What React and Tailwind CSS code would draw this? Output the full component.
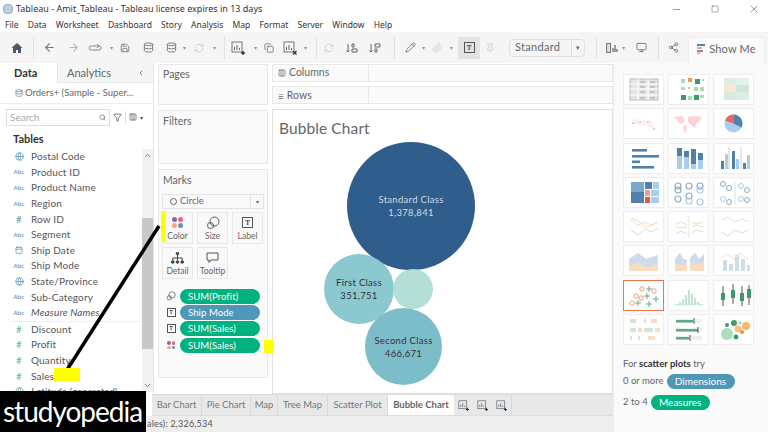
import React from 'react';
import { ArrowLeft, ArrowRight, Save, Database, RefreshCw, Copy, Pencil, Paperclip, Pin, Monitor, Share2, Search, Filter, Columns3, ChevronUp, ChevronDown, ChevronLeft, Minus, X, Square, Globe, Calendar } from 'lucide-react';

const menus = ['File', 'Data', 'Worksheet', 'Dashboard', 'Story', 'Analysis', 'Map', 'Format', 'Server', 'Window', 'Help'];

const fields = [
    ['geo', 'Postal Code'], ['abc', 'Product ID'], ['abc', 'Product Name'], ['abc', 'Region'],
    ['numBlue', 'Row ID'], ['abc', 'Segment'], ['date', 'Ship Date'], ['abc', 'Ship Mode'],
    ['geo', 'State/Province'], ['abc', 'Sub-Category'], ['abcI', 'Measure Names'],
];
const measures = [['num', 'Discount'], ['num', 'Profit'], ['num', 'Quantity'], ['num', 'Sales'], ['geoG', 'Latitude (generated)']];

const tabs = [['Bar Chart', 'w-[50px]'], ['Pie Chart', 'w-[49px]'], ['Map', 'w-[27px]'], ['Tree Map', 'w-[50px]'], ['Scatter Plot', 'w-[60px]']];

const FieldIcon = ({ type }) => {
    if (type === 'abc' || type === 'abcI') return <span className="text-[6px] font-semibold text-[#5a8fb0] w-[12px] text-center leading-none">Abc</span>;
    if (type === 'num') return <span className="text-[9px] text-[#57b08e] w-[12px] text-center leading-none">#</span>;
    if (type === 'numBlue') return <span className="text-[9px] text-[#5a8fb0] w-[12px] text-center leading-none">#</span>;
    if (type === 'date') return <span className="w-[12px] flex justify-center"><Calendar size={8} className="text-[#5a8fb0]" /></span>;
    if (type === 'geoG') return <span className="w-[12px] flex justify-center"><Globe size={9} className="text-[#57b08e]" /></span>;
    return <span className="w-[12px] flex justify-center"><Globe size={9} className="text-[#5a9ab8]" /></span>;
};

const Dot = () => <span className="text-[#999] text-[6px] w-[8px] text-center">▾</span>;
const Sep = () => <div className="w-px h-[22px] bg-[#e2e2e2] shrink-0" />;

const ChartIcon = ({ mark, size = 14 }) => (
    <svg width={size} height={size} viewBox="0 0 14 14" fill="none" stroke="#777" strokeWidth="1">
        <rect x="1" y="1" width="10" height="10" />
        <path d="M3.5 9V6M6 9V4M8.5 9V7" stroke="#3b6f94" />
        {mark === 'plus' && <path d="M10 12h4M12 10v4" stroke="#333" strokeWidth="1.3" />}
        {mark === 'x' && <path d="M10 10l3.5 3.5M13.5 10L10 13.5" stroke="#333" strokeWidth="1.3" />}
    </svg>
);

const TextBox = ({ size = 14 }) => (
    <span className="border border-[#555] font-serif font-bold text-[#555] flex items-center justify-center leading-none" style={{ width: size, height: size, fontSize: size - 3 }}>T</span>
);

const ColorDots = ({ size = 5 }) => (
    <span className="grid grid-cols-2 gap-px">
        <span className="rounded-full bg-[#8b6a9e]" style={{ width: size, height: size }} />
        <span className="rounded-full bg-[#ea6b73]" style={{ width: size, height: size }} />
        <span className="rounded-full bg-[#f2a77d]" style={{ width: size, height: size }} />
        <span className="rounded-full bg-[#5a9aa8]" style={{ width: size, height: size }} />
    </span>
);

const SizeIcon = ({ size = 14 }) => (
    <svg width={size} height={size} viewBox="0 0 14 14" fill="none" stroke="#555" strokeWidth="1">
        <circle cx="8.5" cy="5.5" r="4.5" />
        <circle cx="4.5" cy="9.5" r="3" />
    </svg>
);

const MarkCard = ({ icon, label }) => (
    <div className="w-[31px] h-[32px] bg-[#f9f9f9] border border-[#e8e8e8] flex flex-col items-center justify-between pt-[3px] pb-[1px]">
        <span className="h-[14px] flex items-center">{icon}</span>
        <span className="text-[8.5px] leading-[11px] text-[#666]">{label}</span>
    </div>
);

const Pill = ({ icon, color, label }) => (
    <div className="flex items-center h-[15px]">
        <span className="w-[18px] flex justify-center">{icon}</span>
        <span className={`w-[80px] h-[15px] rounded-full ${color} text-white text-[9.5px] tracking-[0.1px] leading-[15px] pl-[8px]`}>{label}</span>
    </div>
);

const Thumb = ({ active, children }) => (
    <div className={`w-[41px] h-[31px] bg-white flex items-center justify-center ${active ? 'border border-[#e8764a]' : 'border border-[#eeeeee]'}`}>
        <svg width="39" height="29" viewBox="0 0 39 29" fill="none">{children}</svg>
    </div>
);

const Slot = ({ className, children }) => <div className={`flex shrink-0 ${className}`}>{children}</div>;

const B = '#4f81ab';
const LB = '#a9cdee';
const O = '#f8dcc0';
const S = '#cfdcec';

const thumbs = [
    <><rect x="6" y="4" width="28" height="21" fill="#e4e4e4" stroke="#bbb" /><path d="M6 9h28M6 14h28M6 20h28M14 4v21M24 4v21" stroke="#fff" /><path d="M16 7h5M26 7h5M16 12h5M26 12h5M16 17h5M26 17h5M16 23h5M26 23h5" stroke="#888" strokeWidth=".7" /></>,
    <><rect x="12" y="4" width="4" height="4" fill="#a9dcb9" /><rect x="19" y="3" width="4" height="4" fill="#f2994a" /><rect x="26" y="4" width="5" height="5" fill="#3d9a6c" /><rect x="33" y="4" width="2" height="2" fill="#a9dcb9" /><rect x="12" y="12" width="4" height="3" fill="#a9dcb9" /><rect x="19" y="12" width="2" height="2" fill="#f7bd84" /><rect x="25" y="12" width="4" height="4" fill="#a9dcb9" /><rect x="31" y="12" width="4" height="4" fill="#a9dcb9" /><rect x="12" y="20" width="5" height="5" fill="#3d9a6c" /><rect x="19" y="21" width="4" height="4" fill="#a9dcb9" /><rect x="25" y="20" width="5" height="5" fill="#3d9a6c" /><rect x="31" y="20" width="4" height="3" fill="#a9dcb9" /></>,
    <><rect x="10" y="3" width="12" height="7" fill="#dceee3" /><rect x="22" y="3" width="13" height="7" fill="#e3f1e8" /><rect x="10" y="10" width="12" height="7" fill="#fbe6d2" /><rect x="22" y="10" width="13" height="7" fill="#cfe6d8" /><rect x="10" y="17" width="12" height="8" fill="#d6eadd" /><rect x="22" y="17" width="13" height="8" fill="#dceee3" /></>,
    <><path d="M7 11l5-1 4 2 6-2 6 3 2 6-3 1-4-4-5 1-3-2-4 1z" fill="#fdeef0" /><circle cx="9" cy="14" r="1" fill="#f0b0b5" /><circle cx="16" cy="13" r="1" fill="#f0b0b5" /><circle cx="24" cy="13" r=".8" fill="#f0b0b5" /><circle cx="30" cy="20" r="1" fill="#f0b0b5" /></>,
    <path d="M5 8l8-1 3 4-2 3-3 1-3-4zM14 16l4 1-1 7-2-2zM19 8l5-1 9 1-3 5-3 1-1 5-3-2-4-4z" fill="#fbd3d5" />,
    <><circle cx="19.5" cy="14.5" r="9" fill={LB} /><path d="M19.5 14.5V5.5a9 9 0 0 1 8 13z" fill={B} /><path d="M19.5 14.5l-8.5-3a9 9 0 0 1 8.5-6z" fill="#e8675f" /></>,
    <><rect x="8" y="5" width="15" height="2.6" fill={B} /><rect x="8" y="11" width="27" height="2.6" fill={B} /><rect x="8" y="16.5" width="8" height="2.6" fill={B} /><rect x="8" y="22" width="22" height="2.6" fill={B} /></>,
    <><rect x="8" y="4" width="5" height="21" fill={LB} /><rect x="8" y="4" width="5" height="8" fill={B} /><rect x="15" y="7" width="5" height="18" fill={LB} /><rect x="15" y="7" width="5" height="6" fill={B} /><rect x="22" y="5" width="5" height="20" fill={LB} /><rect x="22" y="5" width="5" height="15" fill={B} /><rect x="29" y="9" width="5" height="16" fill={LB} /><rect x="29" y="9" width="5" height="7" fill={B} /></>,
    <><path d="M15 3v22M27 3v22" stroke="#ccc" /><rect x="7" y="17" width="3" height="8" fill={B} /><rect x="11" y="10" width="3" height="15" fill={LB} /><rect x="18" y="7" width="3" height="18" fill={B} /><rect x="22" y="15" width="3" height="10" fill={LB} /><rect x="29" y="19" width="3" height="6" fill={B} /><rect x="33" y="11" width="3" height="14" fill={LB} /></>,
    <><rect x="7" y="4" width="13" height="10" fill="#7aa8cc" /><rect x="7" y="14" width="13" height="11" fill={B} /><rect x="21" y="4" width="7" height="7" fill={B} /><rect x="29" y="4" width="6" height="7" fill={LB} /><rect x="21" y="12" width="5" height="6" fill="#f29c94" /><rect x="27" y="12" width="8" height="6" fill={LB} /><rect x="21" y="19" width="5" height="6" fill="#e0574f" /><rect x="27" y="19" width="8" height="6" fill={LB} /></>,
    <g stroke="#8fa9bf" strokeWidth="1.2"><circle cx="9" cy="8" r="3" /><circle cx="9" cy="12" r="3" /><circle cx="9" cy="21" r="3" /><circle cx="20" cy="8" r="3" /><circle cx="20" cy="18" r="3" /><circle cx="20" cy="23" r="3" stroke={LB} /><circle cx="31" cy="8" r="3" /><circle cx="31" cy="12" r="3" stroke={LB} /><circle cx="31" cy="24" r="3" stroke={LB} /></g>,
    <g stroke="#8fa9bf" strokeWidth="1"><path d="M21 4v22" stroke="#ddd" /><circle cx="9" cy="6" r="2.5" /><circle cx="15" cy="10" r="2.5" /><circle cx="9" cy="21" r="2.5" stroke={LB} /><circle cx="15" cy="24" r="2.5" /><circle cx="27" cy="8" r="2.5" stroke={LB} /><circle cx="33" cy="12" r="2.5" /><circle cx="27" cy="21" r="2.5" stroke={LB} /><circle cx="33" cy="22" r="2.5" /></g>,
    <><path d="M7 8l7 5 7-3 6 3 7-3" stroke={O} /><path d="M7 6l7 3 7 6 6-1 7-4" stroke={O} /><path d="M7 18l7 5 7-6 6 3 7-4" stroke={S} /></>,
    <><path d="M20 4v22" stroke="#e5e5e5" /><path d="M7 12l5-2 6 3M23 10l4 2 7-2" stroke={O} /><path d="M7 15l5 1 6-1M23 15l4-2 7 2" stroke={O} /><path d="M7 22l5-3 6 3M23 21l4-3 7 2" stroke={S} /></>,
    <><path d="M7 8l7-3 7 5 7-3 6 3" stroke={O} /><path d="M7 20l7 4 7-6 7 3 6-3" stroke={S} /><path d="M36 5v20" stroke="#eee" strokeDasharray="1 2" /></>,
    <><path d="M5 25V13l9-6 8 6 12-4v16z" fill={O} /><path d="M5 19V13l9-6 8 6 12-4v8l-12 4-8-4z" fill={S} /></>,
    <><path d="M6 25V13l5-6 4 7 3-1v12zM21 25V12l5-5 4 6 5-5v17z" fill={O} /><path d="M6 17v-4l5-6 4 7 3-1v5l-6 1zM21 17v-5l5-5 4 6 5-5v8l-6 2z" fill={S} /></>,
    <><rect x="9" y="14" width="4" height="11" fill={S} /><rect x="15" y="18" width="4" height="7" fill={S} /><rect x="21" y="9" width="4" height="16" fill={S} /><rect x="27" y="13" width="4" height="12" fill={S} /><rect x="33" y="19" width="3" height="6" fill={S} /><path d="M7 12l7-4 6 5 6-6 8 6" stroke={O} /></>,
    <g fill="none" strokeWidth="1"><g stroke="#f2a36b"><circle cx="8" cy="22" r="2.2" /><circle cx="12" cy="15" r="2.2" /><circle cx="18" cy="8" r="2.2" /><circle cx="30" cy="10" r="2.2" /><circle cx="17" cy="17" r="2.2" /></g><path d="M25 5v6M22 8h6M23 12v6M20 15h6M14 19v6M11 22h6M25 20v6M22 23h6M32 15v6M29 18h6" stroke="#5fae8e" /></g>,
    <><path d="M5 24h30" stroke="#d9ebdf" /><path d="M8 24v-1M11 24v-3M14 24v-6M17 24v-10M20 24v-15M23 24v-11M26 24v-7M29 24v-3M32 24v-1" stroke="#c4e3d1" strokeWidth="2.2" /></>,
    <><path d="M9 5v20M19 3v20M28 5v20M35 4v20" stroke="#555" /><rect x="7" y="12" width="4" height="7" fill="#3d9a6c" /><rect x="17" y="9" width="4" height="8" fill="#3d9a6c" /><rect x="26" y="12" width="4" height="8" fill="#3d9a6c" /><rect x="33" y="8" width="4" height="9" fill="#3d9a6c" /></>,
    <><g fill="#cfe6d8"><rect x="6" y="4" width="6" height="4" /><rect x="20" y="4" width="2" height="4" /><rect x="6" y="13" width="6" height="4" /><rect x="20" y="13" width="9" height="4" /><rect x="6" y="21" width="2" height="4" /><rect x="14" y="21" width="2" height="4" /></g><g fill="#fbdcc2"><rect x="27" y="4" width="6" height="4" /><rect x="14" y="13" width="4" height="4" /><rect x="31" y="13" width="5" height="4" /><rect x="24" y="21" width="7" height="4" /></g></>,
    <><rect x="7" y="4" width="26" height="4" fill="#eee" /><rect x="7" y="13" width="26" height="4" fill="#eee" /><rect x="7" y="21" width="26" height="4" fill="#eee" /><rect x="7" y="5" width="17" height="2.5" fill="#5ea984" /><rect x="7" y="14" width="22" height="2.5" fill="#5ea984" /><rect x="7" y="22" width="13" height="2.5" fill="#5ea984" /><path d="M25 3v6M29 12v6M21 20v6" stroke="#555" /></>,
    <><circle cx="13" cy="19" r="6" fill="#a9e0b8" /><circle cx="24" cy="14" r="3.5" fill="#f8c07f" /><circle cx="32" cy="11" r="4" fill="#f8b56a" /><circle cx="20" cy="8" r="3" fill="#3d9a6c" /><circle cx="13" cy="10" r="2" fill="#3d9a6c" /><circle cx="26" cy="8" r="1.8" fill="#a9e0b8" /><circle cx="28" cy="17" r="2" fill="#f2903f" /><circle cx="22" cy="22" r="2.4" fill="#3d9a6c" /></>,
];

const bubbles = [
    ['left-[74px] top-[32px] w-[128px] h-[128px] bg-[#2f5d8c] text-[#cfdae5]', 'Standard Class', '1,378,841'],
    ['left-[51px] top-[144px] w-[70px] h-[70px] bg-[#8cc8cf] text-[#333]', 'First Class', '351,751'],
    ['left-[120px] top-[159px] w-[40px] h-[40px] bg-[#b4dfd6] text-[#333]', '', ''],
    ['left-[92px] top-[198px] w-[77px] h-[77px] bg-[#7dbdca] text-[#333]', 'Second Class', '466,671'],
];

export default function App() {
    return (
        <div className="relative w-[768px] h-[432px] overflow-hidden bg-white flex flex-col text-[#555]" style={{ fontFamily: 'Lato, sans-serif' }}>
            {/* title bar */}
            <div className="h-[18px] flex items-center text-[#333] text-[9px] shrink-0" style={{ fontFamily: '"Noto Sans", sans-serif' }}>
                <span className="ml-[3px] mr-[3px] w-[10px] h-[10px] rounded-sm bg-[#bcd2e2] border border-[#8fb0c8]" />
                <span>Tableau - Amit_Tableau - Tableau license expires in 13 days</span>
                <div className="ml-auto flex items-center text-[#555]">
                    <Minus size={11} className="mr-[29px]" strokeWidth={1.3} />
                    <Square size={8} className="mr-[29px]" strokeWidth={1.5} />
                    <X size={12} className="mr-[8px]" strokeWidth={1.2} />
                </div>
            </div>

            {/* menu */}
            <div className="h-[14px] flex items-center gap-[9.2px] pl-[5px] text-[8.5px] text-[#333] shrink-0" style={{ fontFamily: '"Noto Sans", sans-serif' }}>
                {menus.map(m => <span key={m}>{m}</span>)}
            </div>

            {/* toolbar */}
            <div className="h-[31px] bg-[#f5f5f5] flex items-center shrink-0 text-[#777]">
                <Slot className="w-[33px] justify-center">
                    <svg width="12" height="12" viewBox="0 0 12 12" fill="#4a5a68"><path d="M6 1L0.5 6H2v5h3V8h2v3h3V6h1.5z" /></svg>
                </Slot>
                <Sep />
                <Slot className="w-[30px] justify-center"><ArrowLeft size={13} /></Slot>
                <Slot className="w-[19px] justify-center"><ArrowRight size={13} className="text-[#bbb]" /></Slot>
                <Slot className="w-[24px] justify-center"><svg width="14" height="10" viewBox="0 0 14 10" fill="none" stroke="#888"><rect x="1" y="3" width="12" height="4" rx="2" /><path d="M9 1l2 2-2 2" /></svg></Slot>
                <Dot />
                <Slot className="w-[20px] justify-center"><Save size={10} /></Slot>
                <Slot className="w-[27px] justify-center"><Database size={11} /></Slot>
                <Slot className="w-[18px] justify-center"><Database size={11} /></Slot>
                <Dot />
                <Slot className="w-[22px] justify-center"><RefreshCw size={10} className="text-[#ccc]" /></Slot>
                <Dot />
                <Slot className="w-[6px]" />
                <Sep />
                <Slot className="w-[26px] justify-center"><ChartIcon mark="plus" /></Slot>
                <Dot />
                <Slot className="w-[20px] justify-center"><Copy size={10} /></Slot>
                <Slot className="w-[22px] justify-center"><ChartIcon mark="x" /></Slot>
                <Dot />
                <Slot className="w-[7px]" />
                <Sep />
                <Slot className="w-[24px] justify-center"><RefreshCw size={10} className="text-[#ccc]" /></Slot>
                <Slot className="w-[22px] justify-center"><svg width="12" height="12" viewBox="0 0 12 12" fill="none" stroke="#666"><path d="M2 2v8M0.5 8.5L2 10l1.5-1.5M6 2h2v3H6zM6 7h5v3H6z" /></svg></Slot>
                <Slot className="w-[24px] justify-center"><svg width="12" height="12" viewBox="0 0 12 12" fill="none" stroke="#666"><path d="M2 2v8M0.5 8.5L2 10l1.5-1.5M6 2h5v3H6zM6 7h2v3H6z" /></svg></Slot>
                <Slot className="w-[7px]" />
                <Sep />
                <Slot className="w-[24px] justify-end pr-[3px]"><Pencil size={11} /></Slot>
                <Dot />
                <Slot className="w-[20px] justify-center"><Paperclip size={10} className="text-[#ccc]" /></Slot>
                <Dot />
                <Slot className="w-[22px] h-[22px] bg-[#e3e3e3] items-center justify-center ml-[3px]"><TextBox size={11} /></Slot>
                <Slot className="w-[20px] justify-center"><Pin size={10} className="text-[#ccc]" /></Slot>
                <Slot className="ml-[9px] w-[76px] h-[18px] border border-[#e0e0e0] rounded-sm items-center text-[11px] tracking-[0.3px] text-[#666] pl-[5px]">
                    <span className="flex-1">Standard</span>
                    <span className="w-[13px] h-full border-l border-[#e0e0e0] text-[7px] flex items-center justify-center">▾</span>
                </Slot>
                <Slot className="w-[11px]" />
                <Sep />
                <Slot className="w-[22px] justify-end"><svg width="13" height="10" viewBox="0 0 13 10" fill="none" stroke="#777"><rect x="0.5" y="0.5" width="4" height="9" fill="#ddd" /><path d="M7 9V5M9 9V2M11 9V6" strokeWidth="1.4" /></svg></Slot>
                <Dot />
                <Slot className="w-[28px] justify-center"><Monitor size={11} /></Slot>
                <Slot className="w-[3px]" />
                <Sep />
                <Slot className="w-[29px] justify-center"><Share2 size={11} /></Slot>
                <div className="self-end w-[77px] h-[26px] bg-[#fafafa] border-t border-x border-[#eeeeee] flex items-center justify-center gap-[3px] pb-[3px] text-[11px] tracking-[0.2px] text-[#666]">
                    <svg width="9" height="10" viewBox="0 0 9 10"><rect width="8" height="2" fill="#5b7fa6" /><rect y="3" width="5" height="2" fill="#9fc0e0" /><rect y="6" width="6" height="2" fill="#e8675f" /><rect y="8.5" width="3" height="1.5" fill="#f2a36b" /></svg>
                    Show Me
                </div>
            </div>

            {/* body */}
            <div className="flex flex-1 min-h-0">
                <div className="w-[613px] shrink-0 flex flex-col">
                    <div className="h-[331px] flex shrink-0">
                        {/* data pane */}
                        <div className="w-[154px] shrink-0 border-r border-[#e6e6e6] flex flex-col">
                            <div className="h-[20px] flex items-stretch text-[11px] shrink-0">
                                <span className="w-[57px] pl-[14px] font-bold text-[#333] leading-[20px]">Data</span>
                                <span className="w-[80px] bg-[#f5f5f5] border-l border-b border-[#e6e6e6] pl-[9px] leading-[20px] text-[#666]">Analytics</span>
                                <span className="flex-1 bg-[#f5f5f5] border-b border-[#e6e6e6] flex items-center"><ChevronLeft size={8} /></span>
                            </div>
                            <div className="h-[21px] flex items-center pl-[15px] gap-[2px] text-[9.5px] border-b border-[#eee] text-[#666] shrink-0">
                                <Database size={8} className="text-[#5a7f99]" />
                                Orders+ (Sample - Super...
                            </div>
                            <div className="h-[24px] flex items-center pl-[6px] shrink-0 mt-[1px]">
                                <div className="w-[104px] h-[17px] border border-[#ddd] flex items-center justify-between px-[3px] text-[10px] text-[#aaa]">
                                    Search<Search size={7} className="text-[#555]" />
                                </div>
                                <Filter size={9} className="ml-[3px]" />
                                <div className="w-px h-[12px] bg-[#ddd] ml-[3px]" />
                                <Columns3 size={8} className="ml-[3px]" />
                                <span className="text-[6px] ml-[3px]">▾</span>
                            </div>
                            <div className="h-[20px] pl-[13px] text-[11px] font-bold text-[#333] flex items-center shrink-0">Tables</div>
                            <div className="flex h-[243px] overflow-hidden shrink-0">
                                <div className="flex-1 overflow-hidden pl-[13px] text-[10px] tracking-[0.15px] text-[#555]">
                                    {fields.map(([t, name]) => (
                                        <div key={name} className="h-[15.6px] flex items-center gap-[6px]">
                                            <FieldIcon type={t} />
                                            <span className={t === 'abcI' ? 'italic' : ''}>{name}</span>
                                        </div>
                                    ))}
                                    <div className="border-t border-[#eee] -ml-[3px]" />
                                    {measures.map(([t, name]) => (
                                        <div key={name} className="h-[15.6px] flex items-center gap-[6px]">
                                            <FieldIcon type={t} />
                                            <span className={t === 'geoG' ? 'italic' : ''}>{name}</span>
                                        </div>
                                    ))}
                                </div>
                                <div className="w-[11px] bg-[#f2f2f2] flex flex-col items-center justify-between">
                                    <div className="w-full">
                                        <div className="h-[12px] flex justify-center items-center"><ChevronUp size={9} /></div>
                                        <div className="h-[57px]" />
                                        <div className="h-[131px] bg-[#c8c8c8]" />
                                    </div>
                                    <ChevronDown size={9} className="mb-[2px]" />
                                </div>
                            </div>
                        </div>

                        {/* cards */}
                        <div className="w-[114px] shrink-0 pl-[4px] pt-[1px] flex flex-col gap-[5px] text-[10.5px] text-[#666]">
                            <div className="h-[41px] bg-[#fafafa] border border-[#e8e8e8] pl-[4px] pt-[2px]">Pages</div>
                            <div className="h-[54px] bg-[#fafafa] border border-[#e8e8e8] pl-[4px] pt-[3px]">Filters</div>
                            <div className="h-[209px] bg-[#fafafa] border border-[#e8e8e8] pl-[3px] pt-[3px] flex flex-col">
                                <div className="pl-[1px]">Marks</div>
                                <div className="mt-[5px] w-[102px] h-[15px] border border-[#e3e3e3] bg-[#f9f9f9] flex items-center text-[9.5px] pl-[7px] gap-[3px]">
                                    <span className="w-[7px] h-[7px] rounded-full border border-[#666]" />
                                    <span className="flex-1">Circle</span>
                                    <span className="w-[13px] h-full border-l border-[#e3e3e3] text-[6px] flex items-center justify-center">▾</span>
                                </div>
                                <div className="flex gap-[4px] mt-[3px]">
                                    <MarkCard icon={<ColorDots />} label="Color" />
                                    <MarkCard icon={<SizeIcon />} label="Size" />
                                    <MarkCard icon={<TextBox size={11} />} label="Label" />
                                </div>
                                <div className="flex gap-[4px] mt-[3px]">
                                    <MarkCard icon={<svg width="13" height="12" viewBox="0 0 13 12" fill="none" stroke="#444"><circle cx="6.5" cy="1.6" r="1.3" fill="#444" /><circle cx="1.8" cy="10" r="1.3" fill="#444" /><circle cx="6.5" cy="10" r="1.3" fill="#444" /><circle cx="11.2" cy="10" r="1.3" fill="#444" /><path d="M6.5 3v5.5M1.8 8.5V6h9.4v2.5" /></svg>} label="Detail" />
                                    <MarkCard icon={<svg width="13" height="12" viewBox="0 0 13 12" fill="none" stroke="#555"><path d="M1 1h11v7H5L3 10.5V8H1z" /></svg>} label="Tooltip" />
                                </div>
                                <div className="flex flex-col gap-[1.3px] mt-[10px]">
                                    <Pill icon={<SizeIcon size={10} />} color="bg-[#00b27f]" label="SUM(Profit)" />
                                    <Pill icon={<TextBox size={9} />} color="bg-[#4f97b8]" label="Ship Mode" />
                                    <Pill icon={<TextBox size={9} />} color="bg-[#00b27f]" label="SUM(Sales)" />
                                    <Pill icon={<ColorDots size={3.5} />} color="bg-[#00b27f]" label="SUM(Sales)" />
                                </div>
                            </div>
                        </div>

                        {/* view */}
                        <div className="flex-1 pl-[4px] pt-[1px] flex flex-col gap-[4px]">
                            <div className="h-[18px] bg-[#fafafa] border border-[#e8e8e8] flex text-[10.5px] text-[#666] items-center">
                                <span className="w-[96px] pl-[5px] flex items-center gap-[3px] border-r border-[#e8e8e8] h-full"><Columns3 size={8} />Columns</span>
                            </div>
                            <div className="h-[18px] bg-[#fafafa] border border-[#e8e8e8] flex text-[10.5px] text-[#666] items-center">
                                <span className="w-[96px] pl-[5px] pt-[2px] flex items-center gap-[3px] border-r border-[#e8e8e8] h-full"><span className="text-[10px] leading-none">≡</span>Rows</span>
                            </div>
                            <div className="h-[285px] mt-[1px] border border-[#e0e0e0] bg-white relative overflow-hidden">
                                <div className="pl-[6px] pt-[7px] text-[15.5px] tracking-[0.1px] text-[#666]">Bubble Chart</div>
                                {bubbles.map(([cls, a, b]) => (
                                    <div key={cls} className={`absolute rounded-full flex flex-col items-center justify-center text-[9.5px] tracking-[0.3px] leading-[13px] ${cls}`}>
                                        <span>{a}</span><span>{b}</span>
                                    </div>
                                ))}
                            </div>
                        </div>
                    </div>

                    {/* sheet tabs */}
                    <div className="h-[22px] ml-[152px] bg-[#e8e8e8] border-y border-[#ddd] flex text-[9.5px] text-[#777] shrink-0">
                        {tabs.map(([name, w]) => (
                            <span key={name} className={`${w} border-r border-[#d8d8d8] flex items-center justify-center`}>{name}</span>
                        ))}
                        <span className="w-[66px] bg-white font-bold flex items-center justify-center text-[#666]">Bubble Chart</span>
                        <div className="w-[58px] flex items-center justify-around border-r border-[#d8d8d8]">
                            <ChartIcon mark="plus" size={11} />
                            <ChartIcon mark="plus" size={11} />
                            <ChartIcon mark="plus" size={11} />
                        </div>
                    </div>

                    {/* status bar */}
                    <div className="flex-1 bg-[#eeeeee] text-[9px] tracking-[0.2px] pl-[147px] leading-[16px]">ales): 2,326,534</div>
                </div>

                {/* show me */}
                <div className="flex-1 bg-[#fafafa] border-l border-[#eeeeee] pt-[11px] pl-[9px]">
                    <div className="grid grid-cols-[41px_41px_41px] gap-x-[4px] gap-y-[3.3px]">
                        {thumbs.map((t, i) => <Thumb key={i} active={i === 18}>{t}</Thumb>)}
                    </div>
                    <div className="mt-[14px] text-[9.5px] text-[#666] leading-none">For <b className="text-[#333]">scatter plots</b> try</div>
                    <div className="mt-[5px] flex items-center text-[9.5px] text-[#666] gap-[3px]">0 or more
                        <span className="h-[15px] w-[68px] rounded-full bg-[#4f97b8] text-white text-[10px] leading-[15px] text-center">Dimensions</span>
                    </div>
                    <div className="mt-[6px] flex items-center text-[9.5px] text-[#666] gap-[3px]">2 to 4
                        <span className="h-[15px] w-[59px] rounded-full bg-[#00b27f] text-white text-[10px] leading-[15px] text-center">Measures</span>
                    </div>
                </div>
            </div>

            {/* annotations drawn over the screenshot */}
            <svg className="absolute left-0 top-0 pointer-events-none" width="768" height="432">
                <line x1="159" y1="226" x2="65" y2="373" stroke="#000" strokeWidth="3.5" />
            </svg>
            <div className="absolute left-[161px] top-[211px] w-[5px] h-[31px] bg-[#ffff00]" />
            <div className="absolute left-[54px] top-[368px] w-[26px] h-[13px] bg-[#ffff00]" />
            <div className="absolute left-[264px] top-[340px] w-[9px] h-[13px] bg-[#ffff00]" />
            <div className="absolute left-0 top-[391px] w-[146px] h-[41px] bg-black text-white text-[28px] tracking-[-1px] leading-[41px] pl-[3px]">studyopedia</div>
        </div>
    );
}
